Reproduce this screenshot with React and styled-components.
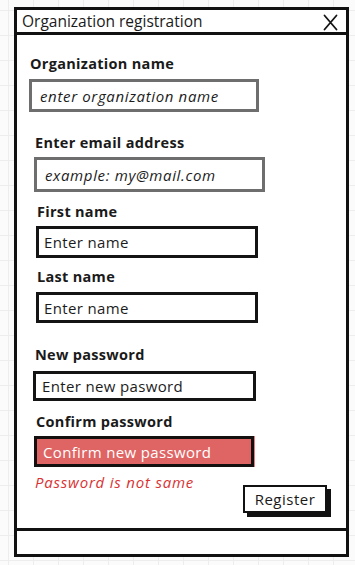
import React from "react";
import styled, { createGlobalStyle } from "styled-components";

const GlobalStyle = createGlobalStyle`
  html, body { margin: 0; padding: 0; }
  body {
    width: 355px;
    height: 565px;
    overflow: hidden;
    font-family: "Open Sans", "Liberation Sans", sans-serif;
    background-color: #fbfbfb;
    background-image:
      linear-gradient(to right, #ededed 1px, transparent 1px),
      linear-gradient(to bottom, #ededed 1px, transparent 1px);
    background-size: 25px 25px;
    background-position: 8px 10px;
  }
`;

const Page = styled.div`
  padding: 7px 0 0 14px;
`;

const Window = styled.div`
  width: 329px;
  height: 544px;
  border: 3px solid #111;
  background: #fff;
  display: flex;
  flex-direction: column;
  box-sizing: content-box;
`;

const TitleBar = styled.div`
  height: 22px;
  border-bottom: 3px solid #111;
  display: flex;
  align-items: center;
  justify-content: space-between;
  padding: 0 8px 0 5px;
`;

const Title = styled.span`
  font-size: 15.5px;
  line-height: 20px;
  color: #1a1a1a;
`;

const CloseIcon = styled.svg`
  width: 15px;
  height: 17px;
  margin-top: 2px;
`;

const Content = styled.div`
  flex: 1;
  display: flex;
  flex-direction: column;
  align-items: flex-start;
`;

const Field = styled.div`
  display: flex;
  flex-direction: column;
  margin-top: ${(p) => p.$top}px;
  margin-left: ${(p) => p.$left}px;
`;

const Label = styled.label`
  font-weight: 700;
  font-size: 14.5px;
  letter-spacing: 0.3px;
  line-height: 18px;
  color: #1a1a1a;
  margin-left: ${(p) => p.$shift || 0}px;
  margin-bottom: ${(p) => p.$gap}px;
`;

const Input = styled.div`
  box-sizing: border-box;
  width: ${(p) => p.$width}px;
  height: ${(p) => p.$height}px;
  border: 3px solid ${(p) => (p.$tone === "grey" ? "#6e6e6e" : p.$tone === "error" ? "#141010" : "#141414")};
  background: ${(p) => (p.$tone === "error" ? "#df6464" : "#fff")};
  display: flex;
  align-items: center;
  padding-left: ${(p) => p.$pad}px;
  font-size: 15px;
  white-space: nowrap;
  letter-spacing: ${(p) => (p.$italic ? "0.65px" : "0.35px")};
  font-style: ${(p) => (p.$italic ? "italic" : "normal")};
  color: ${(p) => (p.$tone === "error" ? "#fff" : "#1c1c1c")};
  box-shadow: ${(p) => (p.$tone === "error" ? "1px 0 0 #e87a7a" : "none")};
`;

const BottomRow = styled.div`
  align-self: stretch;
  display: flex;
  justify-content: space-between;
  align-items: flex-start;
  padding: 0 19px 0 18px;
`;

const ErrorText = styled.span`
  font-style: italic;
  font-size: 15px;
  letter-spacing: 0.8px;
  line-height: 18px;
  color: #d93333;
  margin-top: 6px;
`;

const Button = styled.button`
  margin-top: 18px;
  box-sizing: border-box;
  width: 84px;
  height: 28px;
  border: 2px solid #111;
  background: #fff;
  box-shadow: 4px 4px 0 #111;
  font-family: "Open Sans", "Liberation Sans", sans-serif;
  font-size: 15px;
  letter-spacing: 0.5px;
  color: #1a1a1a;
  padding: 0;
`;

const Footer = styled.div`
  height: 23px;
  border-top: 3px solid #111;
`;

const fields = [
  { label: "Organization name", placeholder: "enter organization name", top: 20, left: 12, gap: 6, width: 230, height: 33, tone: "grey", italic: true, pad: 8, shift: 1 },
  { label: "Enter email address", placeholder: "example: my@mail.com", top: 22, left: 17, gap: 5, width: 231, height: 35, tone: "grey", italic: true, pad: 8, shift: 1 },
  { label: "First name", placeholder: "Enter name", top: 11, left: 19, gap: 5, width: 222, height: 32, tone: "black", pad: 5, shift: 1 },
  { label: "Last name", placeholder: "Enter name", top: 10, left: 19, gap: 6, width: 222, height: 31, tone: "black", pad: 5, shift: 1 },
  { label: "New password", placeholder: "Enter new pasword", top: 23, left: 16, gap: 7, width: 223, height: 30, tone: "black", pad: 6, shift: 2 },
  { label: "Confirm password", placeholder: "Confirm new password", top: 12, left: 17, gap: 5, width: 220, height: 31, tone: "error", pad: 6, shift: 2 },
];

export default function App() {
  return (
    <>
      <GlobalStyle />
      <Page>
        <Window>
          <TitleBar>
            <Title>Organization registration</Title>
            <CloseIcon viewBox="0 0 15 17">
              <path d="M1.5 1.5 L13.5 15.5 M13.5 1.5 L1.5 15.5" stroke="#151515" strokeWidth="1.8" strokeLinecap="round" fill="none" />
            </CloseIcon>
          </TitleBar>
          <Content>
            {fields.map((f) => (
              <Field key={f.label} $top={f.top} $left={f.left}>
                <Label $gap={f.gap} $shift={f.shift}>{f.label}</Label>
                <Input $width={f.width} $height={f.height} $tone={f.tone} $italic={f.italic} $pad={f.pad}>
                  {f.placeholder}
                </Input>
              </Field>
            ))}
            <BottomRow>
              <ErrorText>Password is not same</ErrorText>
              <Button>Register</Button>
            </BottomRow>
          </Content>
          <Footer />
        </Window>
      </Page>
    </>
  );
}
